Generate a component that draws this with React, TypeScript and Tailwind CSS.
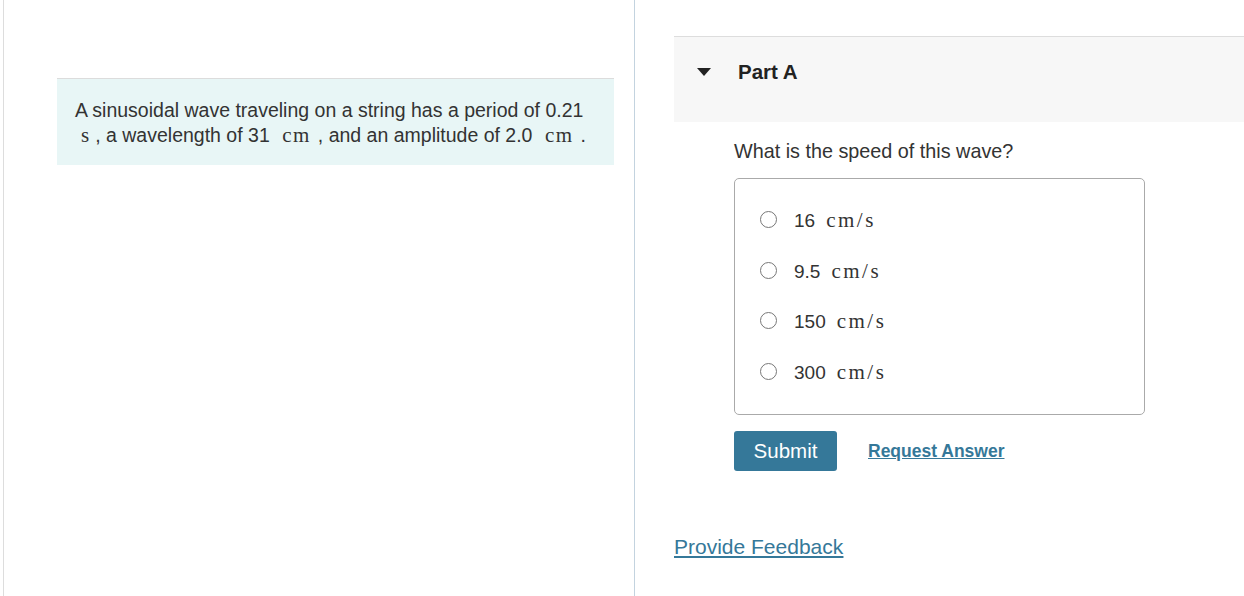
import React from "react";

const serif = "font-['Liberation_Serif','Times_New_Roman',serif]";

function Unit({ children }: { children: React.ReactNode }) {
  return <span className={`${serif} text-[21px] tracking-[1.5px] mx-[7px]`}>{children}</span>;
}

export default function App() {
  const options = ["16", "9.5", "150", "300"];
  return (
    <div className="flex h-[596px] w-[1244px] bg-white pl-[3px] font-['Liberation_Sans',Arial,sans-serif] text-[#333]">
      <div className="w-[632px] shrink-0 border-l border-l-[#dddddd] border-r border-r-[#c3d3df] pl-[53px] pt-[78px]">
        <div className="w-[557px] border-t border-t-[#dcdcdc] bg-[#e8f6f6] pl-[18px] pr-[10px] pt-[19px] pb-[17px] text-[19.5px] leading-[25px]">
          A sinusoidal wave traveling on a string has a period of 0.21
          <br />
          <span className={`${serif} text-[21px] ml-[6px] mr-[6px]`}>s</span>, a wavelength of 31 <Unit>cm</Unit>, and an amplitude of 2.0 <Unit>cm</Unit>.
        </div>
      </div>
      <div className="flex-1 pl-[39px] pt-[36px]">
        <div className="flex h-[86px] items-start border-t border-t-[#dddddd] bg-[#f7f7f7] pl-[23px] pt-[20px]">
          <svg width="14" height="9" viewBox="0 0 14 9" className="mr-[27px] mt-[11px]">
            <polygon points="0,0 14,0 7,8" fill="#222" />
          </svg>
          <span className="text-[20.5px] font-bold text-[#222]">Part A</span>
        </div>
        <div className="pl-[60px]">
          <div className="mt-[16px] text-[19.8px] leading-[26px]">What is the speed of this wave?</div>
          <div className="mt-[14px] flex h-[237px] w-[411px] flex-col rounded-[5px] border border-[#aaaaaa] pl-[25px] pt-[29px]">
            {options.map((o) => (
              <label key={o} className="flex h-[50.5px] items-start">
                <span className="mt-[3px] h-[17px] w-[17px] rounded-full border-[1.5px] border-[#777] bg-white" />
                <span className="ml-[17px] text-[19px] leading-[24px]">
                  {o}
                  <span className={`${serif} ml-[11px] text-[21px] tracking-[2.5px]`}>cm/s</span>
                </span>
              </label>
            ))}
          </div>
          <div className="mt-[16px] flex items-center">
            <button className="h-[40px] w-[103px] rounded-[3px] bg-[#357899] text-[20.5px] text-white">
              Submit
            </button>
            <a className="ml-[31px] text-[17.5px] font-bold text-[#357899] underline">Request Answer</a>
          </div>
        </div>
        <div className="mt-[60px] text-[21px] text-[#357899] underline">
          <a>Provide Feedback</a>
        </div>
      </div>
    </div>
  );
}
